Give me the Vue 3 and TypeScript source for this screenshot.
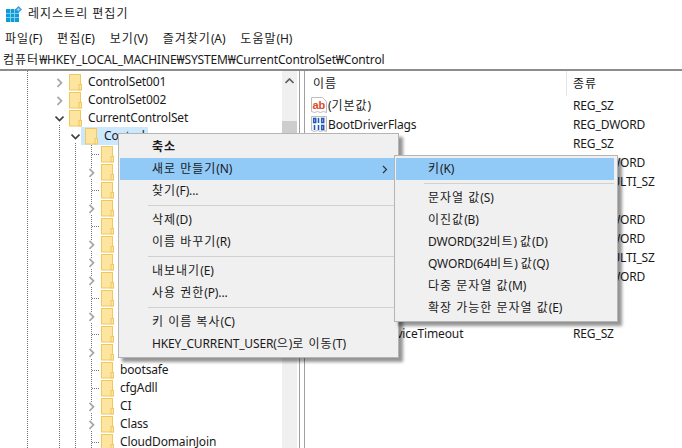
<script setup lang="ts">
type Run = { s: string; ko: boolean }
const runs = (text: string): Run[] =>
  text
    .split(/([\uAC00-\uD7A3]+(?: [\uAC00-\uD7A3]+)*)/)
    .filter((s) => s.length > 0)
    .map((s) => ({ s, ko: /[\uAC00-\uD7A3]/.test(s) }))

const menus = ['파일(F)', '편집(E)', '보기(V)', '즐겨찾기(A)', '도움말(H)']
const tree: { name: string; level: number; state: 'closed' | 'open' | 'leaf'; selected?: boolean }[] = [
  { name: 'ControlSet001', level: 1, state: 'closed' },
  { name: 'ControlSet002', level: 1, state: 'closed' },
  { name: 'CurrentControlSet', level: 1, state: 'open' },
  { name: 'Control', level: 2, state: 'open', selected: true },
  ...(['leaf', 'closed', 'leaf', 'closed', 'leaf', 'closed', 'closed', 'closed', 'leaf', 'closed', 'leaf', 'closed'] as const).map((state) => ({ name: '', level: 3, state })),
  { name: 'bootsafe', level: 3, state: 'leaf' },
  { name: 'cfgAdll', level: 3, state: 'leaf' },
  { name: 'CI', level: 3, state: 'closed' },
  { name: 'Class', level: 3, state: 'closed' },
  { name: 'CloudDomainJoin', level: 3, state: 'leaf' },
]
const values = [
  { icon: 'ab', name: '(기본값)', type: 'REG_SZ' },
  { icon: 'bin', name: 'BootDriverFlags', type: 'REG_DWORD' },
  { icon: '', name: '', type: 'REG_SZ' },
  { icon: '', name: '', type: 'REG_DWORD' },
  { icon: '', name: '', type: 'REG_MULTI_SZ' },
  { icon: '', name: '', type: '' },
  { icon: '', name: '', type: 'REG_DWORD' },
  { icon: '', name: '', type: 'REG_DWORD' },
  { icon: '', name: '', type: 'REG_MULTI_SZ' },
  { icon: '', name: '', type: 'REG_DWORD' },
  { icon: '', name: '', type: '' },
  { icon: '', name: '', type: '' },
  { icon: 'none', name: 'WaitToKillServiceTimeout', type: 'REG_SZ' },
]
const mainMenu: { t: string; active?: boolean; bold?: boolean; arrow?: boolean }[][] = [
  [{ t: '축소', bold: true }, { t: '새로 만들기(N)', active: true, arrow: true }, { t: '찾기(F)...' }],
  [{ t: '삭제(D)' }, { t: '이름 바꾸기(R)' }],
  [{ t: '내보내기(E)' }, { t: '사용 권한(P)...' }],
  [{ t: '키 이름 복사(C)' }, { t: 'HKEY_CURRENT_USER(으)로 이동(T)' }],
]
const subMenu = ['문자열 값(S)', '이진값(B)', 'DWORD(32비트) 값(D)', 'QWORD(64비트) 값(Q)', '다중 문자열 값(M)', '확장 가능한 문자열 값(E)']
const address = '컴퓨터₩HKEY_LOCAL_MACHINE₩SYSTEM₩CurrentControlSet₩Control'
</script>

<template>
  <div class="win">
    <header class="title">
      <svg class="appicon" width="16" height="16" viewBox="0 0 16 16">
        <rect x="0" y="3" width="13" height="13" fill="#0f9bd7" />
        <path d="M4.5 3v13M8.5 3v13M0 7.5h13M0 11.5h13" stroke="#7fd0f0" stroke-width="1" />
        <path d="M12.5 0l3.5 3.5-3.5 3.5L9 3.5z" fill="#3f9fdc" />
        <path d="M12.5 2l1.5 1.5-1.5 1.5L11 3.5z" fill="#a8dcf5" />
      </svg>
      <span><span v-for="(r, i) in runs('레지스트리 편집기')" :key="i" :class="r.ko ? 'ko' : 'la'">{{ r.s }}</span></span>
    </header>
    <nav class="menubar">
      <span v-for="m in menus" :key="m"><span v-for="(r, i) in runs(m)" :key="i" :class="r.ko ? 'ko' : 'la'">{{ r.s }}</span></span>
    </nav>
    <div class="address"><span v-for="(r, i) in runs(address)" :key="i" :class="r.ko ? 'ko' : 'la'">{{ r.s }}</span></div>
    <main class="panes">
      <section class="tree">
        <div class="guide g1"></div>
        <div class="guide g2"></div>
        <div class="guide g3"></div>
        <div class="guide g4"></div>
        <div v-for="(n, i) in tree" :key="i" class="node" :class="'lv' + n.level">
          <span class="twist">
            <svg v-if="n.state === 'closed'" class="chev closed" width="9" height="10" viewBox="0 0 9 10"><path d="M2.5 .8l4 4-4 4" fill="none" stroke="#a6a6a6" stroke-width="1.7" /></svg>
            <svg v-else-if="n.state === 'open'" class="chev" width="9" height="9" viewBox="0 0 9 9"><path d="M.5 2.5l4 4 4-4" fill="none" stroke="#404040" stroke-width="1.7" /></svg>
            <i v-else class="stub"></i>
          </span>
          <span class="label" :class="{ selected: n.selected }">
            <svg class="folder" width="13" height="17" viewBox="0 0 13 17">
              <rect x=".5" y=".5" width="11" height="15.5" fill="#fde5a0" stroke="#efc860" />
              <rect x="10" y="10.5" width="2.5" height="5.5" fill="#fde5a0" stroke="#efc860" />
            </svg>
            <span class="name la">{{ n.name }}</span>
          </span>
        </div>
        <aside class="scroll">
          <svg class="up" width="9" height="6" viewBox="0 0 9 6"><path d="M.5 5L4.5 1l4 4" fill="none" stroke="#606060" stroke-width="1.7" /></svg>
          <div class="thumb"></div>
        </aside>
      </section>
      <div class="splitter"></div>
      <section class="list">
        <div class="head">
          <span class="c1"><span class="ko">이름</span></span>
          <span class="c2"><span class="ko">종류</span></span>
        </div>
        <div v-for="(v, i) in values" :key="i" class="row">
          <span class="c1 cell">
            <svg v-if="v.icon === 'ab'" class="vicon" width="16" height="17" viewBox="0 0 16 17">
              <path d="M.5.5h11l4 4v11l-3-1-3 1-3-1-3 1-3-1z" fill="#fff" stroke="#bdbdbd" />
              <text x="1.5" y="11.5" class="vab">ab</text>
            </svg>
            <svg v-else-if="v.icon === 'bin'" class="vicon" width="16" height="17" viewBox="0 0 16 17">
              <path d="M.5.5h15v15l-3-1-3 1-3-1-3 1-3-1z" fill="#f4f7fc" stroke="#bdbdbd" />
              <path d="M2.7 2.5h2v4h-2zM7.5 2v5M10.7 2.5h2v4h-2zM3.5 9v5M7.5 9v5M10.7 9.5h2v4h-2z" fill="none" stroke="#2458b8" stroke-width="1.5" />
            </svg>
            <span class="vname" :class="{ far: v.icon === 'none' }"><span v-for="(r, j) in runs(v.name)" :key="j" :class="r.ko ? 'ko' : 'la'">{{ r.s }}</span></span>
          </span>
          <span class="c2 la">{{ v.type }}</span>
        </div>
      </section>
    </main>

    <div class="menu main-menu">
      <template v-for="(g, gi) in mainMenu" :key="gi">
        <div v-if="gi" class="sep"></div>
        <div v-for="it in g" :key="it.t" class="item" :class="{ active: it.active, bold: it.bold }">
          <span v-for="(r, i) in runs(it.t)" :key="i" :class="r.ko ? 'ko' : 'la'">{{ r.s }}</span>
          <svg v-if="it.arrow" class="arrow" width="6" height="9" viewBox="0 0 6 9"><path d="M1 1l3.5 3.5L1 8" fill="none" stroke="#333" stroke-width="1.2" /></svg>
        </div>
      </template>
    </div>
    <div class="menu sub-menu">
      <div class="item active"><span class="ko">키</span><span class="la">(K)</span></div>
      <div class="sep sub-sep"></div>
      <div v-for="s in subMenu" :key="s" class="item">
        <span v-for="(r, i) in runs(s)" :key="i" :class="r.ko ? 'ko' : 'la'">{{ r.s }}</span>
      </div>
    </div>
  </div>
</template>

<style>
html, body { margin: 0; background: #fff; }
</style>

<style scoped>
.win {
  position: relative;
  width: 682px;
  height: 448px;
  overflow: hidden;
  background: #fff;
  color: #1a1a1a;
  font: 12px/18px "Noto Sans", "Noto Sans CJK KR", sans-serif;
  display: flex;
  flex-direction: column;
}
.ko { letter-spacing: 1px; }
.la { letter-spacing: -.14px; }
.title {
  height: 28px;
  display: flex;
  align-items: center;
  gap: 6px;
  padding-left: 6px;
  color: #222;
}
.appicon { flex: none; }
.menubar {
  height: 22px;
  display: flex;
  gap: 15px;
  padding-left: 5px;
  align-items: center;
}
.address {
  height: 19px;
  line-height: 19px;
  padding-left: 3px;
  border-bottom: 2px solid #8c8c8c;
  white-space: nowrap;
}
.panes { flex: 1; display: flex; min-height: 0; }
.tree {
  position: relative;
  width: 297px;
  padding-top: 2px;
  overflow: hidden;
  flex: none;
}
.guide { position: absolute; top: 0; bottom: 0; border-left: 1px dotted #777; }
.g1 { left: 27px; }
.g2 { left: 59px; top: 54px; }
.g3 { left: 75px; top: 72px; }
.g4 { left: 91px; top: 72px; }
.node { height: 18px; display: flex; align-items: center; position: relative; }
.lv1 { padding-left: 54px; }
.lv2 { padding-left: 70px; }
.lv3 { padding-left: 86px; }
.twist { width: 15px; height: 18px; flex: none; display: flex; align-items: center; position: relative; }
.chev { background: #fff; margin-left: .5px; }
.closed { margin-top: 2px; }
.stub { position: absolute; left: 6px; top: 9px; width: 7px; border-top: 1px dotted #777; }
.label { display: flex; align-items: center; height: 18px; padding: 0 3px 0 0; }
.label.selected { background: #cce8ff; margin-left: -4px; padding-left: 4px; }
.folder { flex: none; margin-right: 6px; }
.name { white-space: nowrap; }
.scroll {
  position: absolute;
  right: 0;
  top: 0;
  bottom: 0;
  width: 15px;
  background: #f0f0f0;
}
.up { display: block; margin: 7px auto 0; }
.thumb { margin-top: 37px; height: 215px; background: #cdcdcd; }
.splitter {
  width: 6px;
  flex: none;
  border-left: 1px solid #a0a0a0;
  border-right: 1px solid #a0a0a0;
  box-sizing: border-box;
  margin-left: 2px;
}
.list { flex: 1; min-width: 0; }
.head { height: 25px; display: flex; align-items: center; }
.head .c1 { padding-left: 8px; }
.c1 { width: 261px; flex: none; box-sizing: border-box; }
.c2 { padding-left: 7px; white-space: nowrap; }
.head .c2 { border-left: 1px solid #e5e5e5; line-height: 25px; padding-left: 6px; }
.row { height: 19px; display: flex; align-items: center; }
.cell { display: flex; align-items: center; padding-left: 6px; gap: 1px; }
.vicon { flex: none; }
.vname { white-space: nowrap; }
.vname.far { padding-left: 14px; }
.vab { font: 700 11px "Liberation Sans", sans-serif; fill: #d9481f; }
.menu {
  position: absolute;
  background: #f0f0f0;
  border: 1px solid #b5b5b5;
  box-shadow: 4px 4px 3px rgba(0, 0, 0, .42);
  box-sizing: border-box;
}
.main-menu { left: 118px; top: 133px; width: 281px; height: 225px; padding: 2px 1px; }
.sub-menu { left: 394px; top: 155px; width: 224px; height: 167px; padding: 2px 3px 2px 1px; }
.item {
  height: 22px;
  line-height: 22px;
  padding-left: 32px;
  position: relative;
  white-space: nowrap;
  color: #1a1a1a;
}
.item.active { background: #91c9f7; }
.item.bold { font-weight: 700; }
.arrow { position: absolute; right: 9px; top: 7px; }
.sep { height: 1px; background: #d0d0d0; margin: 3px 0 3px 28px; }
</style>
